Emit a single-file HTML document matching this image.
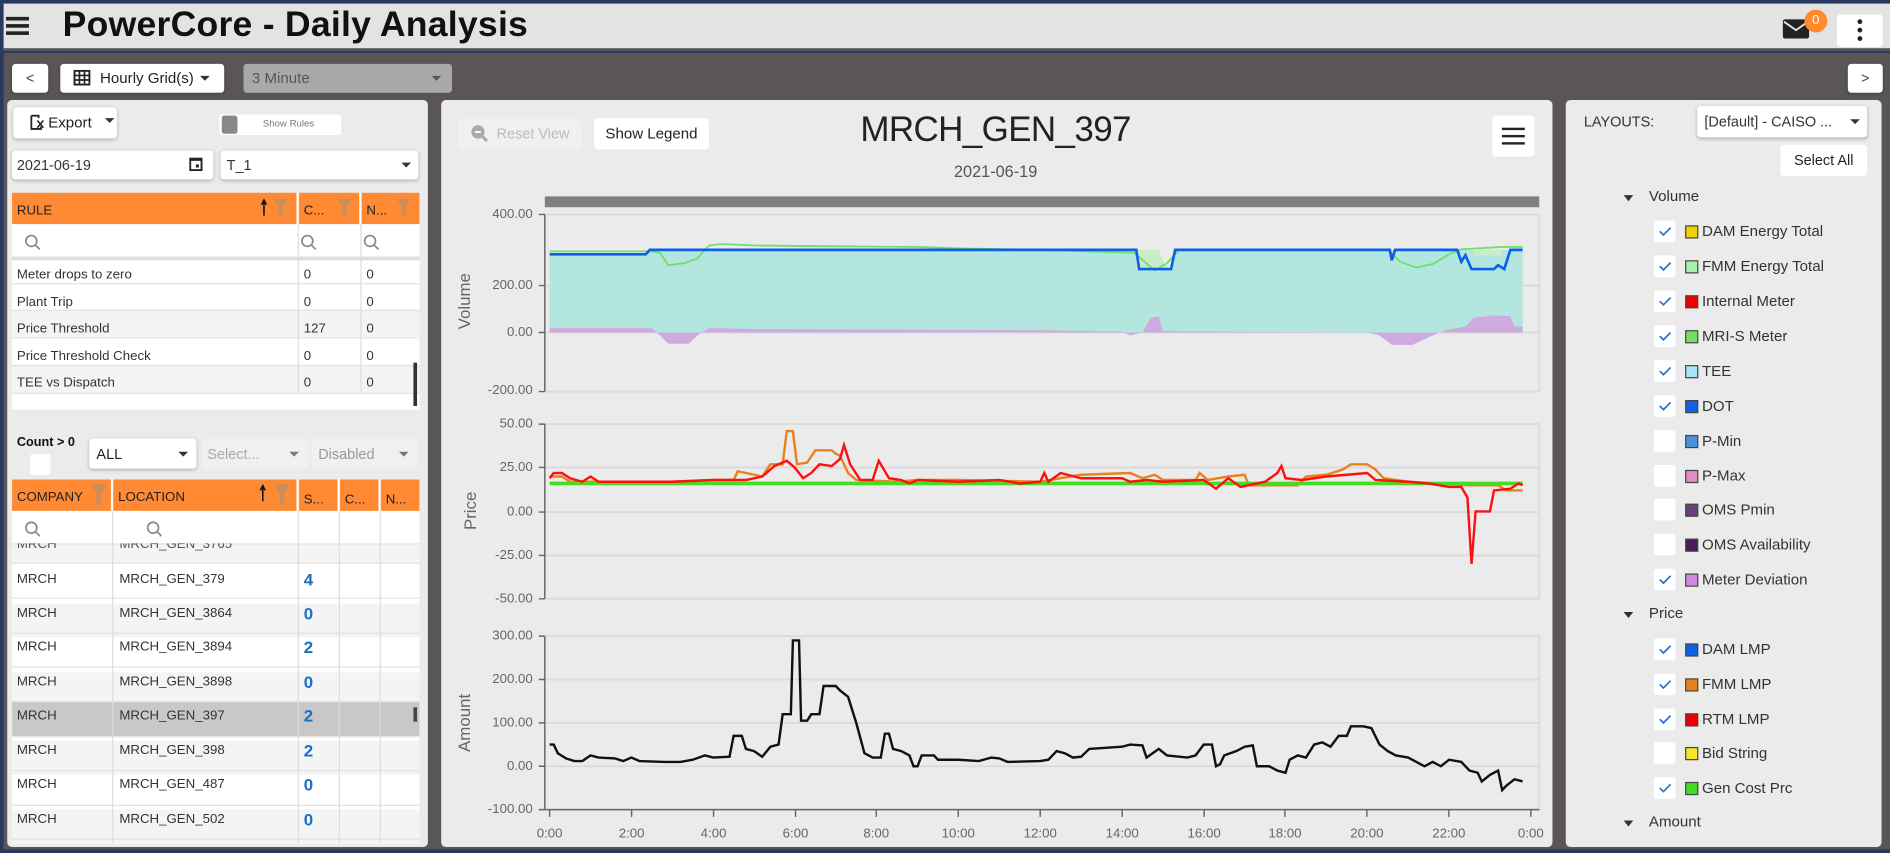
<!DOCTYPE html>
<html><head><meta charset="utf-8"><style>
*{box-sizing:border-box;margin:0;padding:0}
html,body{width:1890px;height:853px;overflow:hidden;background:#283a63;font-family:"Liberation Sans",Arial,sans-serif}
#c{position:absolute;left:0;top:0;width:1568px;height:708px;transform:scale(1.20536,1.20480);transform-origin:0 0;background:#283a63}
.a{position:absolute}
.btn{position:absolute;background:#fff;border-radius:3px;font-size:12px;color:#222;box-shadow:0 1px 3px rgba(0,0,0,.25)}
.car{position:absolute;width:0;height:0;border-left:4px solid transparent;border-right:4px solid transparent;border-top:4px solid #333}
.hdr{position:absolute;background:#ff8a33;height:26px;border-right:2px solid #fff;font-size:11px;color:#222;padding:9px 0 0 4px}
.cell{position:absolute;font-size:11px;color:#333;white-space:nowrap}
.num{position:absolute;font-size:14px;color:#1a6fc4;font-weight:bold}
.lbl{position:absolute;font-size:12.5px;color:#333}
.yl{position:absolute;font-size:11px;color:#666;text-align:right;width:50px}
.xl{position:absolute;font-size:11px;color:#666;width:40px;text-align:center;top:686px}
</style></head><body><div id="c">
<div class="a" style="left:3px;top:3px;width:1565px;height:39px;background:#e3e3e3;border-bottom:2px solid #555"></div>
<div class="a" style="left:5px;top:14px;width:19px;height:3px;background:#222"></div>
<div class="a" style="left:5px;top:20px;width:19px;height:3px;background:#222"></div>
<div class="a" style="left:5px;top:26px;width:19px;height:3px;background:#222"></div>
<div class="a" style="left:52px;top:4px;font-size:29.5px;font-weight:bold;color:#111;letter-spacing:0.2px">PowerCore - Daily Analysis</div>
<svg class="a" style="left:1479px;top:16px" width="22" height="16" viewBox="0 0 22 16"><rect x="0" y="0" width="22" height="16" rx="2" fill="#222"/><path d="M1 2 L11 9 L21 2" stroke="#e3e3e3" stroke-width="1.6" fill="none"/></svg>
<div class="a" style="left:1497px;top:8px;width:19px;height:19px;border-radius:50%;background:#ff8a2a;color:#fff;font-size:11px;text-align:center;line-height:19px">0</div>
<div class="a" style="left:1524px;top:12px;width:38px;height:27px;background:#fff;border-radius:3px"></div>
<div class="a" style="left:1541px;top:16px;width:4px;height:4px;background:#222;border-radius:50%"></div>
<div class="a" style="left:1541px;top:23px;width:4px;height:4px;background:#222;border-radius:50%"></div>
<div class="a" style="left:1541px;top:30px;width:4px;height:4px;background:#222;border-radius:50%"></div>
<div class="a" style="left:3px;top:44px;width:1565px;height:661px;background:#5a5657"></div>
<div class="btn" style="left:10px;top:53px;width:30px;height:24px;text-align:center;line-height:24px;color:#444">&lt;</div>
<div class="btn" style="left:50px;top:53px;width:136px;height:24px"><svg class="a" style="left:11px;top:5px" width="14" height="13" viewBox="0 0 14 13"><rect x="0.8" y="0.8" width="12.4" height="11.4" fill="none" stroke="#222" stroke-width="1.6"/><path d="M0 4.6H14M0 8.4H14M4.9 0V13M9.1 0V13" stroke="#222" stroke-width="1.4"/></svg><span class="a" style="left:33px;top:5px;font-size:12.5px">Hourly Grid(s)</span><div class="car" style="left:116px;top:10px"></div></div>
<div class="a" style="left:202px;top:53px;width:173px;height:24px;background:#a9a9a9;border-radius:3px;font-size:12.5px;color:#555;padding:5px 0 0 7px">3 Minute<div class="car" style="left:156px;top:10px;border-top-color:#555"></div></div>
<div class="btn" style="left:1533px;top:53px;width:29px;height:24px;text-align:center;line-height:24px;color:#444">&gt;</div>

<div class="a" style="left:6px;top:83px;width:349px;height:620px;background:#ebebeb;border-radius:4px"></div>
<div class="btn" style="left:11px;top:89px;width:86px;height:26px"><svg class="a" style="left:14px;top:6px" width="12" height="13" viewBox="0 0 12 13"><path d="M1 1H7V3M1 1V12H9V10" stroke="#222" stroke-width="1.5" fill="none"/><path d="M6 5L11 11M11 5L6 11" stroke="#222" stroke-width="1.3"/></svg><span class="a" style="left:29px;top:6px;font-size:12.5px">Export</span><div class="car" style="left:76px;top:9px"></div></div>
<div class="a" style="left:182px;top:95px;width:101px;height:17px;background:#fff;border-radius:2px"></div>
<div class="a" style="left:184px;top:96px;width:13px;height:15px;background:#888;border-radius:2px"></div>
<div class="a" style="left:218px;top:98px;font-size:8px;color:#777">Show Rules</div>
<div class="btn" style="left:10px;top:125px;width:167px;height:24px"><span class="a" style="left:4px;top:5px;font-size:12px;color:#333">2021-06-19</span><svg class="a" style="left:147px;top:5px" width="11" height="12" viewBox="0 0 11 12"><rect x="0.8" y="1.8" width="9.4" height="9.4" fill="none" stroke="#222" stroke-width="1.6"/><rect x="0" y="1" width="11" height="2.5" fill="#222"/><rect x="5.5" y="6.5" width="2.5" height="2.5" fill="#222"/></svg></div>
<div class="btn" style="left:183px;top:125px;width:164px;height:24px"><span class="a" style="left:5px;top:5px;font-size:12px;color:#333">T_1</span><div class="car" style="left:150px;top:10px"></div></div>
<div class="a" style="left:10px;top:160px;width:338px;height:180px;background:#fff"></div>
<div class="hdr" style="left:10px;top:160px;width:238px">RULE</div>
<div class="hdr" style="left:248px;top:160px;width:52px">C...</div>
<div class="hdr" style="left:300px;top:160px;width:48px;border-right:0">N...</div>
<svg class="a" style="left:214px;top:163px" width="134" height="20"><path d="M5 4V16M3 7L5 3L7 7" stroke="#111" stroke-width="1.3" fill="none"/><path d="M13 2H25L21 8V16H17V8Z" fill="#c98e5c"/><path d="M66 2H78L74 8V16H70V8Z" fill="#c98e5c"/><path d="M115 2H127L123 8V16H119V8Z" fill="#c98e5c"/></svg>
<svg class="a" style="left:10px;top:186px" width="338" height="154"><g stroke="#888" stroke-width="1.4" fill="none"><circle cx="16" cy="14" r="4.5"/><path d="M19.5 17.5L23 21"/><circle cx="245" cy="14" r="4.5"/><path d="M248.5 17.5L252 21"/><circle cx="297" cy="14" r="4.5"/><path d="M300.5 17.5L304 21"/></g><rect x="0" y="72" width="338" height="22" fill="#f4f4f4"/><rect x="0" y="118" width="338" height="22" fill="#f4f4f4"/><g stroke="#e2e2e2"><path d="M0 27.5H338M0 49.5H338M0 71.5H338M0 94.5H338M0 117.5H338M0 140.5H338"/><path d="M237.5 0V140M289.5 0V140" stroke="#ddd"/></g><rect x="0" y="27" width="338" height="3" fill="#ddd"/><rect x="333" y="115" width="3" height="36" fill="#333"/></svg>
<div class="cell" style="left:14px;top:222px">Meter drops to zero</div><div class="cell" style="left:252px;top:222px">0</div><div class="cell" style="left:304px;top:222px">0</div>
<div class="cell" style="left:14px;top:245px">Plant Trip</div><div class="cell" style="left:252px;top:245px">0</div><div class="cell" style="left:304px;top:245px">0</div>
<div class="cell" style="left:14px;top:267px">Price Threshold</div><div class="cell" style="left:252px;top:267px">127</div><div class="cell" style="left:304px;top:267px">0</div>
<div class="cell" style="left:14px;top:290px">Price Threshold Check</div><div class="cell" style="left:252px;top:290px">0</div><div class="cell" style="left:304px;top:290px">0</div>
<div class="cell" style="left:14px;top:312px">TEE vs Dispatch</div><div class="cell" style="left:252px;top:312px">0</div><div class="cell" style="left:304px;top:312px">0</div>
<div class="a" style="left:14px;top:361px;font-size:10.5px;font-weight:bold;color:#111">Count &gt; 0</div>
<div class="a" style="left:25px;top:377px;width:17px;height:17px;background:#fff;border-radius:2px"></div>
<div class="btn" style="left:74px;top:364px;width:89px;height:25px"><span class="a" style="left:6px;top:6px;font-size:12px">ALL</span><div class="car" style="left:74px;top:11px"></div></div>
<div class="a" style="left:168px;top:364px;width:88px;height:25px;background:#f0f0f0;border-radius:3px;font-size:12px;color:#aaa;padding:6px 0 0 4px">Select...<div class="car" style="left:72px;top:11px;border-top-color:#777"></div></div>
<div class="a" style="left:259px;top:364px;width:88px;height:25px;background:#f0f0f0;border-radius:3px;font-size:12px;color:#999;padding:6px 0 0 5px">Disabled<div class="car" style="left:72px;top:11px;border-top-color:#777"></div></div>
<div class="a" style="left:10px;top:398px;width:338px;height:302px;background:#fff"></div>
<div class="hdr" style="left:10px;top:398px;width:84px">COMPANY</div>
<div class="hdr" style="left:94px;top:398px;width:154px">LOCATION</div>
<div class="hdr" style="left:248px;top:398px;width:34px;padding-top:11px">S...</div>
<div class="hdr" style="left:282px;top:398px;width:34px;padding-top:11px">C...</div>
<div class="hdr" style="left:316px;top:398px;width:32px;border-right:0;padding-top:11px">N...</div>
<svg class="a" style="left:10px;top:400px" width="338" height="300"><path d="M65 2H79L74 9V19H70V9Z" fill="#c98e5c"/><path d="M208 4V16M206 7L208 3L210 7" stroke="#111" stroke-width="1.3" fill="none"/><path d="M217 2H231L226 9V19H222V9Z" fill="#c98e5c"/><g stroke="#888" stroke-width="1.4" fill="none"><circle cx="16" cy="38" r="4.5"/><path d="M19.5 41.5L23 45"/><circle cx="117" cy="38" r="4.5"/><path d="M120.5 41.5L124 45"/></g><rect x="0" y="51" width="338" height="16" fill="#f4f4f4"/><rect x="0" y="101" width="338" height="28" fill="#f4f4f4"/><rect x="0" y="158" width="338" height="28" fill="#f4f4f4"/><rect x="0" y="182" width="338" height="29" fill="#c8c8c8"/><rect x="0" y="215" width="338" height="28" fill="#f4f4f4"/><rect x="0" y="272" width="338" height="28" fill="#f4f4f4"/><g stroke="#e2e2e2"><path d="M0 51.5H338M0 67.5H338M0 96.5H338M0 125.5H338M0 153.5H338M0 182.5H338M0 211.5H338M0 239.5H338M0 268.5H338M0 296.5H338"/><path d="M83.5 24V300M237.5 24V300M271.5 24V300M305.5 24V300" stroke="#ddd"/></g><rect x="333" y="187" width="3" height="12" fill="#444"/></svg>
<div class="cell" style="left:14px;top:446px;color:#555;clip-path:inset(5px 0 0 0)">MRCH</div><div class="cell" style="left:99px;top:446px;color:#555;clip-path:inset(5px 0 0 0)">MRCH_GEN_3765</div>
<div class="cell" style="left:14px;top:475px">MRCH</div><div class="cell" style="left:99px;top:475px">MRCH_GEN_379</div><div class="num" style="left:252px;top:473px">4</div>
<div class="cell" style="left:14px;top:503px">MRCH</div><div class="cell" style="left:99px;top:503px">MRCH_GEN_3864</div><div class="num" style="left:252px;top:501px">0</div>
<div class="cell" style="left:14px;top:531px">MRCH</div><div class="cell" style="left:99px;top:531px">MRCH_GEN_3894</div><div class="num" style="left:252px;top:529px">2</div>
<div class="cell" style="left:14px;top:560px">MRCH</div><div class="cell" style="left:99px;top:560px">MRCH_GEN_3898</div><div class="num" style="left:252px;top:558px">0</div>
<div class="cell" style="left:14px;top:588px">MRCH</div><div class="cell" style="left:99px;top:588px">MRCH_GEN_397</div><div class="num" style="left:252px;top:586px">2</div>
<div class="cell" style="left:14px;top:617px">MRCH</div><div class="cell" style="left:99px;top:617px">MRCH_GEN_398</div><div class="num" style="left:252px;top:615px">2</div>
<div class="cell" style="left:14px;top:645px">MRCH</div><div class="cell" style="left:99px;top:645px">MRCH_GEN_487</div><div class="num" style="left:252px;top:643px">0</div>
<div class="cell" style="left:14px;top:674px">MRCH</div><div class="cell" style="left:99px;top:674px">MRCH_GEN_502</div><div class="num" style="left:252px;top:672px">0</div>

<div class="a" style="left:366px;top:83px;width:922px;height:620px;background:#ebebeb;border-radius:4px"></div>
<div class="a" style="left:380px;top:98px;width:102px;height:26px;background:#f0f0f0;border-radius:3px;font-size:12px;color:#bbb;padding:6px 0 0 32px">Reset View</div>
<svg class="a" style="left:390px;top:103px" width="16" height="16"><circle cx="6.5" cy="6.5" r="5.5" fill="#aaa"/><path d="M4 6.5H9" stroke="#fff" stroke-width="1.5"/><path d="M10 10L14 14" stroke="#aaa" stroke-width="2.5"/></svg>
<div class="btn" style="left:493px;top:98px;width:95px;height:26px;box-shadow:none;text-align:center;line-height:26px;font-size:12.5px">Show Legend</div>
<div class="a" style="left:626px;top:92px;width:400px;text-align:center;font-size:29px;color:#222;letter-spacing:-0.5px">MRCH_GEN_397</div>
<div class="a" style="left:726px;top:135px;width:200px;text-align:center;font-size:13.5px;color:#555">2021-06-19</div>
<div class="a" style="left:1238px;top:96px;width:35px;height:34px;background:#fff;border-radius:3px"></div>
<div class="a" style="left:1246px;top:106px;width:19px;height:2px;background:#222"></div>
<div class="a" style="left:1246px;top:112px;width:19px;height:2px;background:#222"></div>
<div class="a" style="left:1246px;top:118px;width:19px;height:2px;background:#222"></div>
<div class="a" style="left:452px;top:163px;width:825px;height:9px;background:#808080"></div>
<svg class="a" style="left:0;top:0" width="1568" height="708">
<g fill="none" stroke="#dadada" stroke-width="1.5">
<rect x="452" y="178" width="825" height="147"/>
<path d="M452 237H1277M452 276H1277"/>
<rect x="452" y="352" width="825" height="145"/>
<path d="M452 388H1277M452 425H1277M452 461H1277"/>
<rect x="452" y="528" width="825" height="144"/>
<path d="M452 564H1277M452 600H1277M452 636H1277"/>
</g>
<g stroke="#666" stroke-width="1.2" fill="none">
<path d="M452 178V325M447 178H452M447 237H452M447 276H452M447 325H452"/>
<path d="M452 352V497M447 352H452M447 388H452M447 425H452M447 461H452M447 497H452"/>
<path d="M452 528V672H1277M447 528H452M447 564H452M447 600H452M447 636H452M447 672H452"/>
<path d="M456 672v6M524 672v6M592 672v6M660 672v6M727 672v6M795 672v6M863 672v6M931 672v6M999 672v6M1066 672v6M1134 672v6M1202 672v6M1270 672v6"/>
</g>
<svg x="456" y="178" width="814" height="147" viewBox="0 -400 24 600" preserveAspectRatio="none" overflow="visible">
<path d="M0 0V-265H2.35L2.45-280H14.35V-215H15.2L15.3-280H23.8V0Z" fill="#b3e6de"/>
<path d="M14.35-280H14.9L15.1-215H14.35ZM22.6-280H23.3V-260H22.6Z" fill="#c8ecc8"/>
<path d="M0 0V-15H2.5L2.7 10 2.9 38H3.4L3.66 5 3.9-15 5-12 8-10 12-8 14-3 14.2 10 14.5 0 14.7-50 14.9-55 15-5 17-2 20 0 20.3 10 20.6 42H21.1L21.6 10 21.9-8 22.4-20 22.6-50 23.1-58 23.5-55 23.6-20H23.8V0Z" fill="#cfaae0"/>
<polyline points="0,-275 2.5,-275 2.7,-270 2.9,-228 3.3,-235 3.6,-250 3.9,-295 4.2,-300 5,-295 7,-292 9,-290 10,-285 12,-280 14.3,-270 14.8,-210 15.1,-235 15.4,-280 20.5,-280 20.8,-240 21.2,-220 21.6,-232 22,-265 22.3,-282 22.7,-285 23.3,-290 23.8,-290" fill="none" stroke="#6fe06a" stroke-width="1.5" vector-effect="non-scaling-stroke"/>
<polyline points="0,-265 2.35,-265 2.45,-280 14.35,-280 14.42,-215 15.2,-215 15.3,-280 20.55,-280 20.6,-245 20.68,-280 22.2,-280 22.3,-240 22.4,-262 22.55,-215 23.1,-215 23.2,-228 23.35,-215 23.5,-280 23.8,-280" fill="none" stroke="#0b5fe8" stroke-width="2.2" vector-effect="non-scaling-stroke"/>
</svg>
<svg x="456" y="352" width="814" height="145" viewBox="0 -50 24 100" preserveAspectRatio="none" overflow="visible">
<polyline points="0,-20 0.3,-20 0.5,-17 2,-17 3,-17 4,-18 4.5,-18 4.6,-23 4.8,-22 5.2,-20 5.4,-27 5.7,-27 5.8,-46 5.95,-46 6.05,-27 6.3,-28 6.5,-35 6.9,-35 7,-33 7.1,-32 7.3,-22 7.5,-18 8.5,-17 9,-18 10,-18 12,-17 12.5,-19 13,-21 14.2,-22 14.5,-19 14.8,-21 15,-18 15.8,-18 15.9,-22 16.1,-18 16.6,-20 17,-21 17.1,-15 18.3,-15 18.5,-20 19,-21 19.4,-24 19.6,-27 20,-27 20.2,-24 20.4,-19 21,-17 21.7,-16 22.5,-15 23.2,-15 23.4,-12 23.8,-12" fill="none" stroke="#e8821e" stroke-width="2" vector-effect="non-scaling-stroke"/>
<polyline points="0,-16 23.8,-16" fill="none" stroke="#44dd22" stroke-width="3" vector-effect="non-scaling-stroke"/>
<polyline points="0,-19 0.1,-22 0.3,-22 0.5,-19 0.8,-17 1,-20 1.2,-17 2,-17 3,-17 4,-18 4.8,-18 5.2,-20 5.5,-26 5.8,-29 6,-25 6.2,-19 6.4,-22 6.6,-27 6.9,-26 7.1,-30 7.2,-38 7.35,-27 7.6,-18 7.9,-18 8.05,-29 8.3,-19 8.6,-18 8.8,-16 9,-18 10,-17 11,-18 11.5,-16 12,-17 12.1,-22 12.2,-17 12.5,-22 13,-19 14,-19 14.2,-17 14.6,-18 15,-17 16,-18 16.3,-13 16.6,-19 16.9,-14 17.5,-17 17.8,-22 17.9,-26 18,-19 18.4,-18 19,-20 20,-22 20.2,-18 21,-17 21.5,-16 22,-14 22.3,-14 22.45,-8 22.55,30 22.65,0 23,0 23.1,-12 23.5,-13 23.7,-16 23.8,-15" fill="none" stroke="#ff1010" stroke-width="2" vector-effect="non-scaling-stroke"/>
</svg>
<svg x="456" y="528" width="814" height="144" viewBox="0 -300 24 400" preserveAspectRatio="none" overflow="visible">
<polyline points="0,-50 0.1,-50 0.2,-30 0.4,-18 0.6,-12 0.8,-12 1,-25 1.2,-20 1.6,-18 1.8,-12 2,-20 2.2,-12 2.8,-10 3.2,-10 3.5,-15 3.8,-25 4,-20 4.4,-22 4.5,-70 4.7,-70 4.8,-40 5,-35 5.2,-22 5.4,-45 5.6,-50 5.7,-120 5.9,-120 5.95,-290 6.1,-290 6.15,-105 6.3,-105 6.4,-120 6.6,-120 6.7,-185 7,-185 7.1,-175 7.3,-160 7.5,-100 7.7,-30 7.9,-20 8.1,-20 8.2,-75 8.3,-75 8.4,-40 8.6,-35 8.8,-25 8.9,0 9,0 9.1,-25 9.4,-25 9.5,-15 10,-15 10.5,-12 10.8,-20 11,-18 11.2,-10 12,-12 12.2,-15 12.4,-35 12.6,-30 12.8,-20 13,-22 13.2,-40 14,-45 14.2,-50 14.5,-48 14.6,-20 14.9,-40 15.1,-25 15.6,-20 15.8,-25 16,-50 16.2,-50 16.3,0 16.4,-5 16.5,-25 16.8,-35 17,-45 17.2,-48 17.3,0 17.6,0 17.8,10 18,15 18.1,-15 18.3,-25 18.5,-20 18.7,-50 18.9,-55 19.1,-45 19.3,-70 19.5,-70 19.6,-92 19.9,-92 20.1,-88 20.3,-50 20.5,-35 20.7,-25 21,-20 21.2,-10 21.4,0 21.6,-10 21.8,0 22,-15 22.3,-10 22.5,10 22.7,15 22.8,35 23,20 23.2,10 23.3,55 23.4,45 23.6,30 23.8,35" fill="none" stroke="#111" stroke-width="2" vector-effect="non-scaling-stroke"/>
</svg>
</svg>
<div class="yl" style="left:392px;top:172px">400.00</div>
<div class="yl" style="left:392px;top:231px">200.00</div>
<div class="yl" style="left:392px;top:270px">0.00</div>
<div class="yl" style="left:392px;top:318px">-200.00</div>
<div class="yl" style="left:392px;top:346px">50.00</div>
<div class="yl" style="left:392px;top:382px">25.00</div>
<div class="yl" style="left:392px;top:419px">0.00</div>
<div class="yl" style="left:392px;top:455px">-25.00</div>
<div class="yl" style="left:392px;top:491px">-50.00</div>
<div class="yl" style="left:392px;top:522px">300.00</div>
<div class="yl" style="left:392px;top:558px">200.00</div>
<div class="yl" style="left:392px;top:594px">100.00</div>
<div class="yl" style="left:392px;top:630px">0.00</div>
<div class="yl" style="left:392px;top:666px">-100.00</div>
<div class="a" style="left:345px;top:242px;width:80px;text-align:center;font-size:14px;color:#666;transform:rotate(-90deg)">Volume</div>
<div class="a" style="left:350px;top:416px;width:80px;text-align:center;font-size:14px;color:#666;transform:rotate(-90deg)">Price</div>
<div class="a" style="left:345px;top:592px;width:80px;text-align:center;font-size:14px;color:#666;transform:rotate(-90deg)">Amount</div>
<div class="xl" style="left:436px">0:00</div><div class="xl" style="left:504px">2:00</div><div class="xl" style="left:572px">4:00</div><div class="xl" style="left:640px">6:00</div><div class="xl" style="left:707px">8:00</div><div class="xl" style="left:775px">10:00</div><div class="xl" style="left:843px">12:00</div><div class="xl" style="left:911px">14:00</div><div class="xl" style="left:979px">16:00</div><div class="xl" style="left:1046px">18:00</div><div class="xl" style="left:1114px">20:00</div><div class="xl" style="left:1182px">22:00</div><div class="xl" style="left:1250px">0:00</div>

<div class="a" style="left:1299px;top:83px;width:262px;height:620px;background:#ebebeb;border-radius:4px"></div>
<div class="a" style="left:1314px;top:94px;font-size:12px;color:#333">LAYOUTS:</div>
<div class="btn" style="left:1408px;top:88px;width:141px;height:26px"><span class="a" style="left:6px;top:6px;font-size:12px;color:#333">[Default] - CAISO ...</span><div class="car" style="left:127px;top:11px"></div></div>
<div class="btn" style="left:1477px;top:120px;width:72px;height:26px;box-shadow:none;text-align:center;line-height:26px">Select All</div>
<div class="car" style="left:1347px;top:162px;border-width:5px 4px 0 4px"></div><div class="lbl" style="left:1368px;top:156px">Volume</div>
<div class="car" style="left:1347px;top:508px;border-width:5px 4px 0 4px"></div><div class="lbl" style="left:1368px;top:502px">Price</div>
<div class="car" style="left:1347px;top:681px;border-width:5px 4px 0 4px"></div><div class="lbl" style="left:1368px;top:675px">Amount</div>
<svg class="a" style="left:1372px;top:0" width="40" height="708">
<g fill="#fff"><rect x="0" y="183" width="18" height="18" rx="2"/><rect x="0" y="212" width="18" height="18" rx="2"/><rect x="0" y="241" width="18" height="18" rx="2"/><rect x="0" y="270" width="18" height="18" rx="2"/><rect x="0" y="299" width="18" height="18" rx="2"/><rect x="0" y="328" width="18" height="18" rx="2"/><rect x="0" y="357" width="18" height="18" rx="2"/><rect x="0" y="386" width="18" height="18" rx="2"/><rect x="0" y="414" width="18" height="18" rx="2"/><rect x="0" y="443" width="18" height="18" rx="2"/><rect x="0" y="472" width="18" height="18" rx="2"/><rect x="0" y="530" width="18" height="18" rx="2"/><rect x="0" y="559" width="18" height="18" rx="2"/><rect x="0" y="588" width="18" height="18" rx="2"/><rect x="0" y="616" width="18" height="18" rx="2"/><rect x="0" y="645" width="18" height="18" rx="2"/></g>
<g fill="none" stroke="#2a6fc9" stroke-width="1.4"><path d="M5 192l3 3 6-6"/><path d="M5 221l3 3 6-6"/><path d="M5 250l3 3 6-6"/><path d="M5 279l3 3 6-6"/><path d="M5 308l3 3 6-6"/><path d="M5 337l3 3 6-6"/><path d="M5 481l3 3 6-6"/><path d="M5 539l3 3 6-6"/><path d="M5 568l3 3 6-6"/><path d="M5 597l3 3 6-6"/><path d="M5 654l3 3 6-6"/></g>
<g stroke="#444" stroke-width="1"><rect x="26.5" y="187.5" width="10" height="10" fill="#f0d000"/><rect x="26.5" y="216.5" width="10" height="10" fill="#a8f0b0"/><rect x="26.5" y="245.5" width="10" height="10" fill="#ee0000"/><rect x="26.5" y="274.5" width="10" height="10" fill="#77dd66"/><rect x="26.5" y="303.5" width="10" height="10" fill="#a8e4f4"/><rect x="26.5" y="332.5" width="10" height="10" fill="#1060e8"/><rect x="26.5" y="361.5" width="10" height="10" fill="#4a90dd"/><rect x="26.5" y="390.5" width="10" height="10" fill="#e48ac4"/><rect x="26.5" y="418.5" width="10" height="10" fill="#6a3f80"/><rect x="26.5" y="447.5" width="10" height="10" fill="#4a1c5a"/><rect x="26.5" y="476.5" width="10" height="10" fill="#d08ae0"/><rect x="26.5" y="534.5" width="10" height="10" fill="#1060e8"/><rect x="26.5" y="563.5" width="10" height="10" fill="#e8821e"/><rect x="26.5" y="592.5" width="10" height="10" fill="#ee0000"/><rect x="26.5" y="620.5" width="10" height="10" fill="#f5e62a"/><rect x="26.5" y="649.5" width="10" height="10" fill="#44dd22"/></g>
</svg>
<div class="lbl" style="left:1412px;top:185px">DAM Energy Total</div>
<div class="lbl" style="left:1412px;top:214px">FMM Energy Total</div>
<div class="lbl" style="left:1412px;top:243px">Internal Meter</div>
<div class="lbl" style="left:1412px;top:272px">MRI-S Meter</div>
<div class="lbl" style="left:1412px;top:301px">TEE</div>
<div class="lbl" style="left:1412px;top:330px">DOT</div>
<div class="lbl" style="left:1412px;top:359px">P-Min</div>
<div class="lbl" style="left:1412px;top:388px">P-Max</div>
<div class="lbl" style="left:1412px;top:416px">OMS Pmin</div>
<div class="lbl" style="left:1412px;top:445px">OMS Availability</div>
<div class="lbl" style="left:1412px;top:474px">Meter Deviation</div>
<div class="lbl" style="left:1412px;top:532px">DAM LMP</div>
<div class="lbl" style="left:1412px;top:561px">FMM LMP</div>
<div class="lbl" style="left:1412px;top:590px">RTM LMP</div>
<div class="lbl" style="left:1412px;top:618px">Bid String</div>
<div class="lbl" style="left:1412px;top:647px">Gen Cost Prc</div>
</div></body></html>
